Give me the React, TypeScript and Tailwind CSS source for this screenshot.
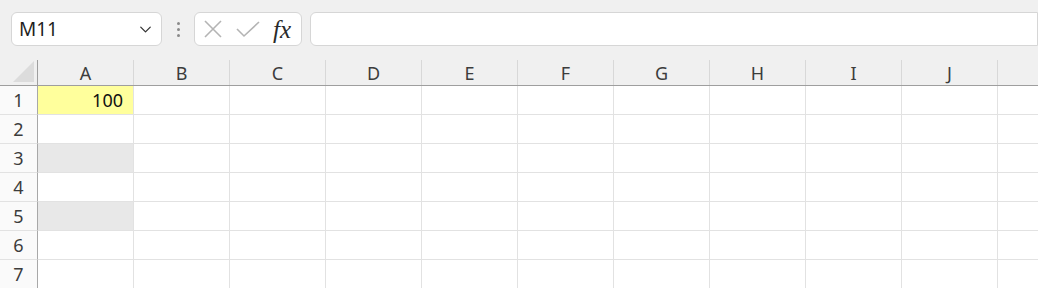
import React from 'react'
import { ChevronDown } from 'lucide-react'

const cols = ['A', 'B', 'C', 'D', 'E', 'F', 'G', 'H', 'I', 'J', '']
const rows = [1, 2, 3, 4, 5, 6, 7]

// fill for the cells in column A
const fillA: Record<number, string> = {
  1: 'bg-[#ffff9c]',
  3: 'bg-[#e8e8e8]',
  5: 'bg-[#e8e8e8]',
}

function Toolbar() {
  return (
    <div className="flex h-[60px] items-start pt-[12px] pl-[11px]">
      {/* name box */}
      <div className="flex h-[34px] w-[151px] items-center justify-between rounded-[6px] border border-[#d6d6d6] bg-white pl-[7px] pr-[6px]">
        <span className="text-[19px] text-[#1f1f1f]">M11</span>
        <ChevronDown className="h-[19px] w-[19px] text-[#333]" strokeWidth={1.6} />
      </div>

      {/* grip dots */}
      <div className="flex h-[34px] w-[32px] flex-col items-center justify-center gap-[3px]">
        <span className="h-[3px] w-[3px] rounded-full bg-[#8a8a8a]" />
        <span className="h-[3px] w-[3px] rounded-full bg-[#8a8a8a]" />
        <span className="h-[3px] w-[3px] rounded-full bg-[#8a8a8a]" />
      </div>

      {/* cancel / enter / fx */}
      <div className="flex h-[34px] w-[108px] items-center rounded-[6px] border border-[#d6d6d6] bg-white pl-[8px]">
        <svg width="20" height="20" viewBox="0 0 20 20" className="shrink-0">
          <path d="M2 2 L18 18 M18 2 L2 18" stroke="#b4b4b4" strokeWidth="1.6" fill="none" />
        </svg>
        <svg width="26" height="20" viewBox="0 0 26 20" className="ml-[12px] shrink-0">
          <path d="M2 10 L9 17 L24 3" stroke="#b4b4b4" strokeWidth="1.6" fill="none" />
        </svg>
        <span className="ml-[12px] font-['Liberation_Serif',serif] text-[25px] italic leading-none text-[#2a2a2a]">
          fx
        </span>
      </div>

      {/* formula input */}
      <div className="ml-[8px] h-[34px] flex-1 rounded-l-[6px] border border-[#d6d6d6] bg-white" />
    </div>
  )
}

function Sheet() {
  return (
    <div className="grid grid-cols-[38px_repeat(11,96px)] grid-rows-[26px_repeat(7,29px)]">
      {/* corner */}
      <div className="relative border-r border-b border-[#9e9e9e] bg-[#f0f0f0]">
        <div className="absolute right-[3px] bottom-[3px] h-[21px] w-[21px] bg-[#dcdcdc] [clip-path:polygon(100%_0,100%_100%,0_100%)]" />
      </div>
      {cols.map((c, i) => (
        <div
          key={i}
          className="flex items-center justify-center border-b border-[#9e9e9e] bg-[#f0f0f0] text-[18px] text-[#3c3c3c]"
        >
          <div className="flex h-full w-full items-center justify-center border-r border-[#d8d8d8] pt-[2px]">
            {c}
          </div>
        </div>
      ))}

      {rows.map((r) => (
        <React.Fragment key={r}>
          <div className="flex items-center justify-center border-r border-b border-r-[#a8a8a8] border-b-[#e2e2e2] bg-[#fafafa] text-[18px] text-[#3c3c3c]">
            {r}
          </div>
          {cols.map((c, i) => (
            <div
              key={i}
              className={`flex items-center justify-end border-r border-b border-[#e2e2e2] pr-[10px] text-[18px] text-[#111] ${
                c === 'A' && fillA[r] ? fillA[r] : 'bg-white'
              }`}
            >
              {c === 'A' && r === 1 ? '100' : ''}
            </div>
          ))}
        </React.Fragment>
      ))}
    </div>
  )
}

export default function App() {
  return (
    <div className="h-[288px] w-[1038px] overflow-hidden bg-[#f0f0f0] font-['Noto_Sans',sans-serif]">
      <Toolbar />
      <Sheet />
    </div>
  )
}
